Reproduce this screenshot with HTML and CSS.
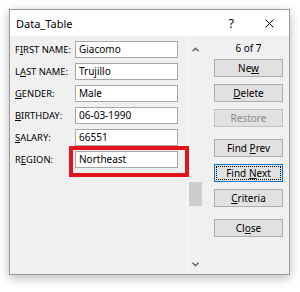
FILE: index.html
```html
<!DOCTYPE html>
<html>
<head>
<meta charset="utf-8">
<link rel="stylesheet" href="styles.css">
</head>
<body>
<div class="dialog">
  <div class="titlebar">
    <span class="title">Data_Table</span>
    <span class="help">?</span>
    <svg class="close" width="9" height="9" viewBox="0 0 9 9"><path d="M0.5 0.5L8.5 8.5M8.5 0.5L0.5 8.5" stroke="#000" stroke-width="1"/></svg>
  </div>
  <div class="body">
    <div class="fields">
      <div class="row"><span class="lbl">F<u>I</u>RST NAME:</span><div class="box">Giacomo</div></div>
      <div class="row"><span class="lbl">L<u>A</u>ST NAME:</span><div class="box">Trujillo</div></div>
      <div class="row"><span class="lbl"><u>G</u>ENDER:</span><div class="box">Male</div></div>
      <div class="row"><span class="lbl"><u>B</u>IRTHDAY:</span><div class="box">06-03-1990</div></div>
      <div class="row"><span class="lbl"><u>S</u>ALARY:</span><div class="box">66551</div></div>
      <div class="row"><span class="lbl">R<u>E</u>GION:</span><div class="box">Northeast<span class="highlight"></span></div></div>
    </div>
    <div class="scroll">
      <svg class="chev chev-up" width="7" height="5" viewBox="0 0 7 5"><path d="M0.5 4.2L3.5 1.2L6.5 4.2" fill="none" stroke="#606060" stroke-width="1.4"/></svg>
      <div class="thumb"></div>
      <svg class="chev chev-down" width="7" height="5" viewBox="0 0 7 5"><path d="M0.5 0.8L3.5 3.8L6.5 0.8" fill="none" stroke="#606060" stroke-width="1.4"/></svg>
    </div>
    <div class="actions">
      <div class="count">6 of 7</div>
      <button class="btn">Ne<u>w</u></button>
      <button class="btn"><u>D</u>elete</button>
      <button class="btn btn-disabled">Restore</button>
      <button class="btn btn-group">Find <u>P</u>rev</button>
      <button class="btn btn-focus">Find <u>N</u>ext</button>
      <button class="btn"><u>C</u>riteria</button>
      <button class="btn btn-group">Cl<u>o</u>se</button>
    </div>
  </div>
</div>
</body>
</html>
```

FILE: styles.css
```css
html, body {
  margin: 0;
  padding: 0;
  background: #ffffff;
}
body {
  width: 300px;
  height: 292px;
  overflow: hidden;
  font-family: "Noto Sans", "Open Sans", sans-serif;
  font-size: 10px;
  color: #000;
}
.dialog {
  margin: 9px 0 0 9px;
  width: 279px;
  height: 264px;
  border: 1px solid #9a9a9a;
  background: #f0f0f0;
  box-shadow: 0 3px 10px rgba(0, 0, 0, 0.28);
  display: flex;
  flex-direction: column;
}
.titlebar {
  height: 26px;
  flex: none;
  background: #ffffff;
  display: flex;
  align-items: center;
  padding-left: 6px;
}
.title {
  font-size: 11px;
}
.help {
  margin-left: auto;
  font-size: 12px;
}
.close {
  margin-left: 31px;
  margin-right: 15px;
}
.body {
  flex: 1;
  display: flex;
}
.fields {
  width: 177px;
  box-sizing: border-box;
  padding: 5px 0 0 5px;
}
.row {
  display: flex;
  align-items: center;
  height: 17px;
  margin-bottom: 5px;
}
.lbl {
  width: 60px;
  flex: none;
  white-space: nowrap;
  font-size: 9.4px;
}
.box {
  position: relative;
  width: 103px;
  height: 17px;
  box-sizing: border-box;
  border: 1px solid #a8a8a8;
  background: #ffffff;
  padding-left: 3px;
  line-height: 15px;
}
.highlight {
  position: absolute;
  left: -7px;
  top: -6px;
  width: 120px;
  height: 31px;
  box-sizing: border-box;
  border: 4px solid #e3141c;
}
.scroll {
  width: 15px;
  box-sizing: border-box;
  border-left: 1px solid #f9f9f9;
  display: flex;
  flex-direction: column;
  align-items: center;
}
.chev {
  display: block;
  flex: none;
}
.chev-up {
  margin-top: 11px;
}
.thumb {
  width: 13px;
  height: 24px;
  margin-top: 130px;
  background: #cdcdcd;
}
.chev-down {
  margin-top: 56px;
}
.actions {
  flex: 1;
  display: flex;
  flex-direction: column;
  padding: 0 6px 0 12px;
}
.count {
  margin-top: 6px;
  height: 12px;
  line-height: 12px;
  margin-bottom: 5px;
  text-align: center;
}
.btn {
  display: block;
  height: 18px;
  width: 100%;
  margin: 0 0 7px 0;
  padding: 0;
  box-sizing: border-box;
  border: 1px solid #adadad;
  background: #e1e1e1;
  font-family: inherit;
  font-size: 10px;
  color: #000;
  line-height: 16px;
  text-align: center;
}
.btn-group {
  margin-top: 5px;
}
.btn-disabled {
  color: #8a8a8a;
  border-color: #c4c4c4;
}
.btn-focus {
  border-color: #0078d7;
  outline: 1px dotted #000;
  outline-offset: -3px;
}
```
